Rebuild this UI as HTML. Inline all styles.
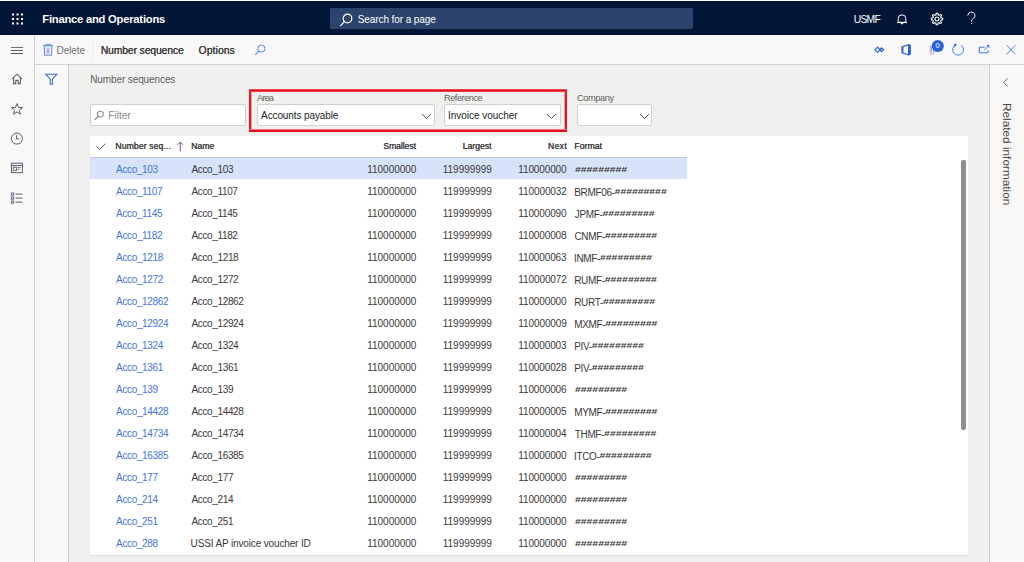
<!DOCTYPE html>
<html><head><meta charset="utf-8"><title>Number sequences</title><style>
html,body{margin:0;padding:0;width:1024px;height:562px;overflow:hidden;position:relative;background:#f0f0f0}
.t{position:absolute;font-family:"Liberation Sans",sans-serif;line-height:1;white-space:nowrap}
svg{overflow:visible}
</style></head><body>
<div style="position:absolute;left:0px;top:0px;width:1024px;height:562px;background:#f0f0ef"></div>
<div style="position:absolute;left:0px;top:0px;width:1024px;height:1px;background:#ffffff"></div>
<div style="position:absolute;left:0px;top:1px;width:1024px;height:34px;background:#011536"></div>
<div style="position:absolute;left:0px;top:35px;width:1024px;height:29px;background:#f8f8f8"></div>
<div style="position:absolute;left:0px;top:64px;width:1024px;height:1px;background:#d2d1d0"></div>
<div style="position:absolute;left:0px;top:35px;width:34px;height:527px;background:#f8f8f8"></div>
<div style="position:absolute;left:34px;top:35px;width:1px;height:527px;background:#d0cfce"></div>
<div style="position:absolute;left:35px;top:65px;width:33px;height:497px;background:#f8f8f8"></div>
<div style="position:absolute;left:68px;top:65px;width:1px;height:497px;background:#d0cfce"></div>
<div style="position:absolute;left:989px;top:65px;width:35px;height:497px;background:#f9f8f7"></div>
<div style="position:absolute;left:989px;top:65px;width:1px;height:497px;background:#cdcdcd"></div>
<svg style="position:absolute;left:0px;top:0px" width="34" height="35" viewBox="0 0 34 35"><rect x="12" y="13.5" width="2" height="2" fill="#fff"/><rect x="12" y="18" width="2" height="2" fill="#fff"/><rect x="12" y="22.5" width="2" height="2" fill="#fff"/><rect x="16.5" y="13.5" width="2" height="2" fill="#fff"/><rect x="16.5" y="18" width="2" height="2" fill="#fff"/><rect x="16.5" y="22.5" width="2" height="2" fill="#fff"/><rect x="21" y="13.5" width="2" height="2" fill="#fff"/><rect x="21" y="18" width="2" height="2" fill="#fff"/><rect x="21" y="22.5" width="2" height="2" fill="#fff"/></svg>
<div class="t" style="left:42.35px;top:14.00px;font-size:11.2px;color:#ffffff;font-weight:bold;letter-spacing:-0.217px;">Finance and Operations</div>
<div style="position:absolute;left:330px;top:8px;width:363px;height:21px;background:#2b446b;border-radius:1.5px"></div>
<svg style="position:absolute;left:338px;top:12px" width="16" height="16" viewBox="0 0 16 16"><circle cx="9.5" cy="6.5" r="4.3" fill="none" stroke="#fff" stroke-width="1.2"/><line x1="6.4" y1="9.6" x2="2.6" y2="13.6" stroke="#fff" stroke-width="1.3" stroke-linecap="round"/></svg>
<div class="t" style="left:357.80px;top:15.00px;font-size:10px;color:#ffffff;letter-spacing:-0.094px;">Search for a page</div>
<div class="t" style="left:853.65px;top:15.00px;font-size:10.3px;color:#ffffff;letter-spacing:-0.667px;">USMF</div>
<svg style="position:absolute;left:895px;top:12px" width="14" height="14" viewBox="0 0 14 14"><path d="M3.2 10.3 V6.6 a3.8 3.8 0 0 1 7.6 0 V10.3 Z" fill="none" stroke="#fff" stroke-width="1"/><line x1="2" y1="10.6" x2="12" y2="10.6" stroke="#fff" stroke-width="1"/><path d="M5.9 10.9 a1.1 1.1 0 0 0 2.2 0" fill="#fff" stroke="#fff" stroke-width="0.8"/></svg>
<svg style="position:absolute;left:930px;top:11.5px" width="14" height="14" viewBox="0 0 14 14"><circle cx="7" cy="7" r="2" fill="none" stroke="#fff" stroke-width="1.05"/><polygon points="7.00,1.25 7.15,1.25 7.30,1.26 7.45,1.27 7.60,1.29 7.75,1.33 7.88,1.44 7.96,1.82 7.96,2.47 8.00,2.84 8.08,2.96 8.18,3.01 8.28,3.05 8.39,3.09 8.49,3.13 8.59,3.17 8.69,3.21 8.79,3.25 8.89,3.30 8.98,3.35 9.09,3.38 9.23,3.36 9.52,3.11 9.98,2.66 10.31,2.45 10.48,2.46 10.61,2.54 10.73,2.63 10.85,2.73 10.96,2.83 11.07,2.93 11.17,3.04 11.27,3.15 11.37,3.27 11.46,3.39 11.54,3.52 11.55,3.69 11.34,4.02 10.89,4.48 10.64,4.77 10.62,4.91 10.65,5.02 10.70,5.11 10.75,5.21 10.79,5.31 10.83,5.41 10.87,5.51 10.91,5.61 10.95,5.72 10.99,5.82 11.04,5.92 11.16,6.00 11.53,6.04 12.18,6.04 12.56,6.12 12.67,6.25 12.71,6.40 12.73,6.55 12.74,6.70 12.75,6.85 12.75,7.00 12.75,7.15 12.74,7.30 12.73,7.45 12.71,7.60 12.67,7.75 12.56,7.88 12.18,7.96 11.53,7.96 11.16,8.00 11.04,8.08 10.99,8.18 10.95,8.28 10.91,8.39 10.87,8.49 10.83,8.59 10.79,8.69 10.75,8.79 10.70,8.89 10.65,8.98 10.62,9.09 10.64,9.23 10.89,9.52 11.34,9.98 11.55,10.31 11.54,10.48 11.46,10.61 11.37,10.73 11.27,10.85 11.17,10.96 11.07,11.07 10.96,11.17 10.85,11.27 10.73,11.37 10.61,11.46 10.48,11.54 10.31,11.55 9.98,11.34 9.52,10.89 9.23,10.64 9.09,10.62 8.98,10.65 8.89,10.70 8.79,10.75 8.69,10.79 8.59,10.83 8.49,10.87 8.39,10.91 8.28,10.95 8.18,10.99 8.08,11.04 8.00,11.16 7.96,11.53 7.96,12.18 7.88,12.56 7.75,12.67 7.60,12.71 7.45,12.73 7.30,12.74 7.15,12.75 7.00,12.75 6.85,12.75 6.70,12.74 6.55,12.73 6.40,12.71 6.25,12.67 6.12,12.56 6.04,12.18 6.04,11.53 6.00,11.16 5.92,11.04 5.82,10.99 5.72,10.95 5.61,10.91 5.51,10.87 5.41,10.83 5.31,10.79 5.21,10.75 5.11,10.70 5.02,10.65 4.91,10.62 4.77,10.64 4.48,10.89 4.02,11.34 3.69,11.55 3.52,11.54 3.39,11.46 3.27,11.37 3.15,11.27 3.04,11.17 2.93,11.07 2.83,10.96 2.73,10.85 2.63,10.73 2.54,10.61 2.46,10.48 2.45,10.31 2.66,9.98 3.11,9.52 3.36,9.23 3.38,9.09 3.35,8.98 3.30,8.89 3.25,8.79 3.21,8.69 3.17,8.59 3.13,8.49 3.09,8.39 3.05,8.28 3.01,8.18 2.96,8.08 2.84,8.00 2.47,7.96 1.82,7.96 1.44,7.88 1.33,7.75 1.29,7.60 1.27,7.45 1.26,7.30 1.25,7.15 1.25,7.00 1.25,6.85 1.26,6.70 1.27,6.55 1.29,6.40 1.33,6.25 1.44,6.12 1.82,6.04 2.47,6.04 2.84,6.00 2.96,5.92 3.01,5.82 3.05,5.72 3.09,5.61 3.13,5.51 3.17,5.41 3.21,5.31 3.25,5.21 3.30,5.11 3.35,5.02 3.38,4.91 3.36,4.77 3.11,4.48 2.66,4.02 2.45,3.69 2.46,3.52 2.54,3.39 2.63,3.27 2.73,3.15 2.83,3.04 2.93,2.93 3.04,2.83 3.15,2.73 3.27,2.63 3.39,2.54 3.52,2.46 3.69,2.45 4.02,2.66 4.48,3.11 4.77,3.36 4.91,3.38 5.02,3.35 5.11,3.30 5.21,3.25 5.31,3.21 5.41,3.17 5.51,3.13 5.61,3.09 5.72,3.05 5.82,3.01 5.92,2.96 6.00,2.84 6.04,2.47 6.04,1.82 6.12,1.44 6.25,1.33 6.40,1.29 6.55,1.27 6.70,1.26 6.85,1.25" fill="none" stroke="#fff" stroke-width="1.05" stroke-linejoin="round"/></svg>
<svg style="position:absolute;left:966px;top:12px" width="11" height="13" viewBox="0 0 11 13"><path d="M1.8 3.6 a3.6 3.6 0 1 1 5.4 3.1 c-1.1 0.7 -1.6 1.3 -1.6 2.6 v0.6" fill="none" stroke="#fff" stroke-width="1"/><circle cx="5.6" cy="11.6" r="0.65" fill="#fff"/></svg>
<svg style="position:absolute;left:11px;top:46px" width="13" height="9" viewBox="0 0 13 9"><rect x="0" y="1" width="12" height="1" fill="#707070"/><rect x="0" y="4" width="12" height="1" fill="#606060"/><rect x="0" y="7" width="12" height="1" fill="#505050"/></svg>
<svg style="position:absolute;left:42px;top:43px" width="12" height="14" viewBox="0 0 12 14"><path d="M2.3 2.6 H9.9 L9.5 12.3 H2.7 Z" fill="none" stroke="#5f8ff0" stroke-width="1.1" stroke-linejoin="round"/><line x1="1.2" y1="2.4" x2="11" y2="2.4" stroke="#5f8ff0" stroke-width="1"/><path d="M4.3 2 V1.2 H7.9 V2" fill="none" stroke="#5f8ff0" stroke-width="0.9"/><rect x="4.6" y="4.6" width="3" height="6.2" fill="#c3b1e6"/></svg>
<div class="t" style="left:56.55px;top:46.00px;font-size:10px;color:#737373;letter-spacing:-0.070px;">Delete</div>
<div style="position:absolute;left:92px;top:39px;width:1px;height:21px;background:#ebebeb"></div>
<div class="t" style="left:100.75px;top:46.00px;font-size:10.2px;color:#3b3a39;letter-spacing:-0.029px;text-shadow:0.25px 0 0 currentColor;">Number sequence</div>
<div class="t" style="left:198.60px;top:46.00px;font-size:10.2px;color:#3b3a39;letter-spacing:0.158px;text-shadow:0.25px 0 0 currentColor;">Options</div>
<svg style="position:absolute;left:254px;top:44px" width="13" height="12" viewBox="0 0 13 12"><circle cx="7.4" cy="4.6" r="3.6" fill="none" stroke="#5b86ea" stroke-width="1"/><line x1="4.8" y1="7.2" x2="1.6" y2="10.4" stroke="#5b86ea" stroke-width="1.1" stroke-linecap="round"/></svg>
<svg style="position:absolute;left:872px;top:44px" width="14" height="11" viewBox="0 0 14 11"><path d="M2.9 5.8 L5.5 3.2 L8.1 5.8 L5.5 8.4 Z" fill="none" stroke="#2a63d8" stroke-width="1.2"/><path d="M6.8 5.8 L9.6 3 L12.4 5.8 L9.6 8.6 Z" fill="#2a63d8"/><rect x="9" y="5.2" width="1.3" height="1.3" fill="#dfe7f8"/></svg>
<svg style="position:absolute;left:900px;top:43px" width="12" height="14" viewBox="0 0 12 14"><path d="M1.4 3.6 L8.6 0.9 L10.9 1.9 V11.6 L8.6 12.6 L1.4 10.2 Z M3.4 4.3 V9.7 L8 10.9 V2.5 Z" fill="#2a63d8" fill-rule="evenodd"/></svg>
<svg style="position:absolute;left:928px;top:42px" width="8" height="14" viewBox="0 0 8 14"><path d="M2.2 3.2 V10.4 a1.8 1.8 0 0 0 3.6 0 V2.2" fill="none" stroke="#b9a3dc" stroke-width="1.1"/><path d="M3.6 4.5 V10.2" stroke="#7f9ce8" stroke-width="0.9"/></svg>
<svg style="position:absolute;left:931px;top:39px" width="14" height="14" viewBox="0 0 14 14"><circle cx="6.8" cy="7" r="6.1" fill="#2a63d8"/></svg>
<div class="t" style="left:935.55px;top:42.00px;font-size:7.6px;color:#ffffff;">0</div>
<svg style="position:absolute;left:951px;top:43px" width="15" height="14" viewBox="0 0 15 14"><path d="M9.96 2.12 A5.4 5.4 0 1 1 4.56 1.93" fill="none" stroke="#4a7ae8" stroke-width="1"/><path d="M2.9 0.7 L6.3 1.3 L3.6 4.2 Z" fill="#3b6fe6"/></svg>
<svg style="position:absolute;left:977px;top:44px" width="14" height="11" viewBox="0 0 14 11"><path d="M7.8 3.3 H2.3 V8.8 H10.9 V6.2" fill="none" stroke="#4a7ae8" stroke-width="1.05"/><path d="M7.2 6.2 L11.2 2.2" fill="none" stroke="#4a7ae8" stroke-width="1"/><path d="M9.2 0.9 L12.4 0.9 L12.4 4.1 Z" fill="#3b6fe6"/></svg>
<svg style="position:absolute;left:1005px;top:44px" width="12" height="11" viewBox="0 0 12 11"><path d="M1.6 1.2 L10.4 10.2 M10.4 1.2 L1.6 10.2" fill="none" stroke="#4a7ae8" stroke-width="0.95"/></svg>
<svg style="position:absolute;left:10px;top:72px" width="14" height="14" viewBox="0 0 14 14"><path d="M2.2 6.8 L7 2.2 L11.8 6.8 M3.6 5.6 V11.6 H5.8 V8.4 H8.2 V11.6 H10.4 V5.6" fill="none" stroke="#66586f" stroke-width="1.1"/></svg>
<svg style="position:absolute;left:10px;top:102px" width="14" height="14" viewBox="0 0 14 14"><path d="M7 1.6 L8.5 5.4 L12.6 5.6 L9.4 8.2 L10.5 12.2 L7 9.9 L3.5 12.2 L4.6 8.2 L1.4 5.6 L5.5 5.4 Z" fill="none" stroke="#66586f" stroke-width="1"/></svg>
<svg style="position:absolute;left:10px;top:131px" width="14" height="15" viewBox="0 0 14 15"><circle cx="6.9" cy="7.6" r="5.5" fill="none" stroke="#66586f" stroke-width="1"/><path d="M6.5 4.2 V8 H9.2" fill="none" stroke="#66586f" stroke-width="1"/></svg>
<svg style="position:absolute;left:10px;top:161px" width="14" height="14" viewBox="0 0 14 14"><rect x="1.4" y="2.2" width="11" height="9.4" fill="none" stroke="#66586f" stroke-width="1"/><line x1="1.4" y1="4.6" x2="12.4" y2="4.6" stroke="#66586f" stroke-width="1"/><rect x="3.2" y="6.3" width="3.2" height="3.4" fill="none" stroke="#66586f" stroke-width="0.9"/><path d="M7.6 6.6 H10.6 M7.6 8.4 H9.6" stroke="#66586f" stroke-width="0.9"/></svg>
<svg style="position:absolute;left:10px;top:191px" width="14" height="14" viewBox="0 0 14 14"><rect x="1.3" y="2" width="2.4" height="2.2" fill="none" stroke="#66586f" stroke-width="0.9"/><rect x="1.3" y="6" width="2.4" height="2.2" fill="none" stroke="#66586f" stroke-width="0.9"/><rect x="1.3" y="10" width="2.4" height="2.2" fill="none" stroke="#66586f" stroke-width="0.9"/><path d="M5.6 3.1 H12.4 M5.6 7.1 H12.4 M5.6 11.1 H12.4" stroke="#66586f" stroke-width="1"/></svg>
<svg style="position:absolute;left:44px;top:72px" width="15" height="14" viewBox="0 0 15 14"><path d="M1.8 2.2 H12.9 L8.4 7.2 V12.2 H6.3 V7.2 Z" fill="none" stroke="#3d6fe0" stroke-width="1.1"/></svg>
<div class="t" style="left:90.15px;top:75.00px;font-size:10px;color:#605e5c;letter-spacing:-0.100px;">Number sequences</div>
<div style="position:absolute;left:90px;top:104px;width:156px;height:22px;background:#fff;border:1px solid #cfcfcf;border-radius:2px;box-sizing:border-box"></div>
<svg style="position:absolute;left:94px;top:110px" width="11" height="11" viewBox="0 0 11 11"><circle cx="6.4" cy="4.2" r="3" fill="none" stroke="#777" stroke-width="1"/><line x1="4.2" y1="6.4" x2="1.3" y2="9.3" stroke="#777" stroke-width="1.1" stroke-linecap="round"/></svg>
<div class="t" style="left:108.25px;top:111.00px;font-size:10px;color:#8a8886;letter-spacing:0.070px;">Filter</div>
<div style="position:absolute;left:249px;top:89px;width:318px;height:1px;background:rgba(232,16,28,0.75)"></div>
<div style="position:absolute;left:249px;top:90px;width:318px;height:1px;background:rgba(232,16,28,1)"></div>
<div style="position:absolute;left:249px;top:91px;width:318px;height:1px;background:rgba(232,16,28,0.8)"></div>
<div style="position:absolute;left:249px;top:129px;width:318px;height:1px;background:rgba(232,16,28,0.55)"></div>
<div style="position:absolute;left:249px;top:130px;width:318px;height:2px;background:rgba(232,16,28,1)"></div>
<div style="position:absolute;left:249px;top:92px;width:2px;height:37px;background:rgba(232,16,28,1)"></div>
<div style="position:absolute;left:251px;top:92px;width:1px;height:37px;background:rgba(232,16,28,0.35)"></div>
<div style="position:absolute;left:565px;top:92px;width:2px;height:37px;background:rgba(232,16,28,1)"></div>
<div style="position:absolute;left:564px;top:92px;width:1px;height:37px;background:rgba(232,16,28,0.35)"></div>
<div class="t" style="left:257.00px;top:94.00px;font-size:9.2px;color:#605e5c;letter-spacing:-0.833px;">Area</div>
<div style="position:absolute;left:257px;top:104px;width:178px;height:21.5px;background:#fff;border:1px solid #d0d0d0;border-radius:2px;box-sizing:border-box"></div>
<div class="t" style="left:261.10px;top:111.00px;font-size:10px;color:#201f1e;letter-spacing:-0.113px;">Accounts payable</div>
<svg style="position:absolute;left:421px;top:112.5px" width="11" height="7" viewBox="0 0 11 7"><path d="M1 1 L5.5 5.5 L10 1" fill="none" stroke="#555" stroke-width="1"/></svg>
<div class="t" style="left:444.05px;top:94.00px;font-size:9.2px;color:#605e5c;letter-spacing:-0.469px;">Reference</div>
<div style="position:absolute;left:444px;top:104px;width:117px;height:21.5px;background:#fff;border:1px solid #d0d0d0;border-radius:2px;box-sizing:border-box"></div>
<div class="t" style="left:447.90px;top:111.00px;font-size:10px;color:#201f1e;letter-spacing:-0.018px;">Invoice voucher</div>
<svg style="position:absolute;left:546px;top:112.5px" width="11" height="7" viewBox="0 0 11 7"><path d="M1 1 L5.5 5.5 L10 1" fill="none" stroke="#555" stroke-width="1"/></svg>
<div class="t" style="left:577.10px;top:94.00px;font-size:9.2px;color:#605e5c;letter-spacing:-0.375px;">Company</div>
<div style="position:absolute;left:577px;top:104px;width:74.5px;height:21.5px;background:#fff;border:1px solid #d0d0d0;border-radius:2px;box-sizing:border-box"></div>
<svg style="position:absolute;left:639px;top:112.5px" width="11" height="7" viewBox="0 0 11 7"><path d="M1 1 L5.5 5.5 L10 1" fill="none" stroke="#555" stroke-width="1"/></svg>
<div style="position:absolute;left:90px;top:136px;width:878px;height:419px;background:#fff;box-shadow:0 1px 1px rgba(0,0,0,0.08)"></div>
<svg style="position:absolute;left:95px;top:142px" width="12" height="9" viewBox="0 0 12 9"><path d="M1.5 4.5 L4.5 7.5 L10.5 1.5" fill="none" stroke="#605e5c" stroke-width="1"/></svg>
<div class="t" style="left:115.25px;top:142.00px;font-size:8.6px;color:#3b3a39;letter-spacing:0.117px;text-shadow:0.35px 0 0 currentColor;">Number seq...</div>
<svg style="position:absolute;left:176px;top:141px" width="8" height="11" viewBox="0 0 8 11"><path d="M4.3 1 V10.5 M1.5 3.8 L4.3 1 L7.1 3.8" fill="none" stroke="#6a5a7a" stroke-width="1"/></svg>
<div class="t" style="left:191.05px;top:142.00px;font-size:8.6px;color:#3b3a39;letter-spacing:0.050px;text-shadow:0.35px 0 0 currentColor;">Name</div>
<div class="t" style="left:383.20px;top:142.00px;font-size:8.6px;color:#3b3a39;letter-spacing:-0.043px;text-shadow:0.35px 0 0 currentColor;">Smallest</div>
<div class="t" style="left:462.60px;top:142.00px;font-size:8.6px;color:#3b3a39;letter-spacing:0.025px;text-shadow:0.35px 0 0 currentColor;">Largest</div>
<div class="t" style="left:547.85px;top:142.00px;font-size:8.6px;color:#3b3a39;letter-spacing:0.333px;text-shadow:0.35px 0 0 currentColor;">Next</div>
<div class="t" style="left:574.25px;top:142.00px;font-size:8.6px;color:#3b3a39;letter-spacing:0.080px;text-shadow:0.35px 0 0 currentColor;">Format</div>
<div style="position:absolute;left:90px;top:156.5px;width:597px;height:1px;background:#c8c8c8"></div>
<div style="position:absolute;left:90px;top:157.5px;width:597px;height:21.5px;background:#d6e3fa"></div>
<div class="t" style="left:116.10px;top:165.00px;font-size:10px;color:#4574e0;letter-spacing:-0.360px;">Acco_103</div>
<div class="t" style="left:191.50px;top:165.00px;font-size:10px;color:#3a3938;letter-spacing:-0.360px;">Acco_103</div>
<div class="t" style="left:367.25px;top:165.00px;font-size:10px;color:#3a3938;letter-spacing:-0.031px;">110000000</div>
<div class="t" style="left:442.80px;top:165.00px;font-size:10px;color:#3a3938;letter-spacing:-0.037px;">119999999</div>
<div class="t" style="left:518.25px;top:165.00px;font-size:10px;color:#3a3938;letter-spacing:-0.119px;">110000000</div>
<div class="t" style="left:575.00px;top:165.00px;font-size:10px;color:#3a3938;"><span style="display:inline-block;font-weight:bold;font-size:10.5px;letter-spacing:-0.05px;transform:translateY(-1.5px) scaleY(0.74);transform-origin:0 60%">#########</span></div>
<div class="t" style="left:116.10px;top:187.00px;font-size:10px;color:#4574e0;letter-spacing:-0.360px;">Acco_1107</div>
<div class="t" style="left:191.50px;top:187.00px;font-size:10px;color:#3a3938;letter-spacing:-0.360px;">Acco_1107</div>
<div class="t" style="left:367.25px;top:187.00px;font-size:10px;color:#3a3938;letter-spacing:-0.031px;">110000000</div>
<div class="t" style="left:442.80px;top:187.00px;font-size:10px;color:#3a3938;letter-spacing:-0.037px;">119999999</div>
<div class="t" style="left:518.25px;top:187.00px;font-size:10px;color:#3a3938;letter-spacing:-0.088px;">110000032</div>
<div class="t" style="left:574.25px;top:187.00px;font-size:10px;color:#3a3938;"><span style="letter-spacing:-0.35px">BRMF06-</span><span style="display:inline-block;font-weight:bold;font-size:10.5px;letter-spacing:-0.05px;transform:translateY(-1.5px) scaleY(0.74);transform-origin:0 60%">#########</span></div>
<div class="t" style="left:116.10px;top:209.00px;font-size:10px;color:#4574e0;letter-spacing:-0.360px;">Acco_1145</div>
<div class="t" style="left:191.50px;top:209.00px;font-size:10px;color:#3a3938;letter-spacing:-0.360px;">Acco_1145</div>
<div class="t" style="left:367.25px;top:209.00px;font-size:10px;color:#3a3938;letter-spacing:-0.031px;">110000000</div>
<div class="t" style="left:442.80px;top:209.00px;font-size:10px;color:#3a3938;letter-spacing:-0.037px;">119999999</div>
<div class="t" style="left:518.25px;top:209.00px;font-size:10px;color:#3a3938;letter-spacing:-0.119px;">110000090</div>
<div class="t" style="left:574.75px;top:209.00px;font-size:10px;color:#3a3938;"><span style="letter-spacing:-0.35px">JPMF-</span><span style="display:inline-block;font-weight:bold;font-size:10.5px;letter-spacing:-0.05px;transform:translateY(-1.5px) scaleY(0.74);transform-origin:0 60%">#########</span></div>
<div class="t" style="left:116.10px;top:231.00px;font-size:10px;color:#4574e0;letter-spacing:-0.360px;">Acco_1182</div>
<div class="t" style="left:191.50px;top:231.00px;font-size:10px;color:#3a3938;letter-spacing:-0.360px;">Acco_1182</div>
<div class="t" style="left:367.25px;top:231.00px;font-size:10px;color:#3a3938;letter-spacing:-0.031px;">110000000</div>
<div class="t" style="left:442.80px;top:231.00px;font-size:10px;color:#3a3938;letter-spacing:-0.037px;">119999999</div>
<div class="t" style="left:518.25px;top:231.00px;font-size:10px;color:#3a3938;letter-spacing:-0.119px;">110000008</div>
<div class="t" style="left:574.50px;top:231.00px;font-size:10px;color:#3a3938;"><span style="letter-spacing:-0.35px">CNMF-</span><span style="display:inline-block;font-weight:bold;font-size:10.5px;letter-spacing:-0.05px;transform:translateY(-1.5px) scaleY(0.74);transform-origin:0 60%">#########</span></div>
<div class="t" style="left:116.10px;top:253.00px;font-size:10px;color:#4574e0;letter-spacing:-0.360px;">Acco_1218</div>
<div class="t" style="left:191.50px;top:253.00px;font-size:10px;color:#3a3938;letter-spacing:-0.360px;">Acco_1218</div>
<div class="t" style="left:367.25px;top:253.00px;font-size:10px;color:#3a3938;letter-spacing:-0.031px;">110000000</div>
<div class="t" style="left:442.80px;top:253.00px;font-size:10px;color:#3a3938;letter-spacing:-0.037px;">119999999</div>
<div class="t" style="left:518.25px;top:253.00px;font-size:10px;color:#3a3938;letter-spacing:-0.119px;">110000063</div>
<div class="t" style="left:574.00px;top:253.00px;font-size:10px;color:#3a3938;"><span style="letter-spacing:-0.35px">INMF-</span><span style="display:inline-block;font-weight:bold;font-size:10.5px;letter-spacing:-0.05px;transform:translateY(-1.5px) scaleY(0.74);transform-origin:0 60%">#########</span></div>
<div class="t" style="left:116.10px;top:275.00px;font-size:10px;color:#4574e0;letter-spacing:-0.360px;">Acco_1272</div>
<div class="t" style="left:191.50px;top:275.00px;font-size:10px;color:#3a3938;letter-spacing:-0.360px;">Acco_1272</div>
<div class="t" style="left:367.25px;top:275.00px;font-size:10px;color:#3a3938;letter-spacing:-0.031px;">110000000</div>
<div class="t" style="left:442.80px;top:275.00px;font-size:10px;color:#3a3938;letter-spacing:-0.037px;">119999999</div>
<div class="t" style="left:518.25px;top:275.00px;font-size:10px;color:#3a3938;letter-spacing:-0.088px;">110000072</div>
<div class="t" style="left:574.25px;top:275.00px;font-size:10px;color:#3a3938;"><span style="letter-spacing:-0.35px">RUMF-</span><span style="display:inline-block;font-weight:bold;font-size:10.5px;letter-spacing:-0.05px;transform:translateY(-1.5px) scaleY(0.74);transform-origin:0 60%">#########</span></div>
<div class="t" style="left:116.10px;top:297.00px;font-size:10px;color:#4574e0;letter-spacing:-0.360px;">Acco_12862</div>
<div class="t" style="left:191.50px;top:297.00px;font-size:10px;color:#3a3938;letter-spacing:-0.360px;">Acco_12862</div>
<div class="t" style="left:367.25px;top:297.00px;font-size:10px;color:#3a3938;letter-spacing:-0.031px;">110000000</div>
<div class="t" style="left:442.80px;top:297.00px;font-size:10px;color:#3a3938;letter-spacing:-0.037px;">119999999</div>
<div class="t" style="left:518.25px;top:297.00px;font-size:10px;color:#3a3938;letter-spacing:-0.119px;">110000000</div>
<div class="t" style="left:574.25px;top:297.00px;font-size:10px;color:#3a3938;"><span style="letter-spacing:-0.35px">RURT-</span><span style="display:inline-block;font-weight:bold;font-size:10.5px;letter-spacing:-0.05px;transform:translateY(-1.5px) scaleY(0.74);transform-origin:0 60%">#########</span></div>
<div class="t" style="left:116.10px;top:319.00px;font-size:10px;color:#4574e0;letter-spacing:-0.360px;">Acco_12924</div>
<div class="t" style="left:191.50px;top:319.00px;font-size:10px;color:#3a3938;letter-spacing:-0.360px;">Acco_12924</div>
<div class="t" style="left:367.25px;top:319.00px;font-size:10px;color:#3a3938;letter-spacing:-0.031px;">110000000</div>
<div class="t" style="left:442.80px;top:319.00px;font-size:10px;color:#3a3938;letter-spacing:-0.037px;">119999999</div>
<div class="t" style="left:518.25px;top:319.00px;font-size:10px;color:#3a3938;letter-spacing:-0.088px;">110000009</div>
<div class="t" style="left:574.25px;top:319.00px;font-size:10px;color:#3a3938;"><span style="letter-spacing:-0.35px">MXMF-</span><span style="display:inline-block;font-weight:bold;font-size:10.5px;letter-spacing:-0.05px;transform:translateY(-1.5px) scaleY(0.74);transform-origin:0 60%">#########</span></div>
<div class="t" style="left:116.10px;top:341.00px;font-size:10px;color:#4574e0;letter-spacing:-0.360px;">Acco_1324</div>
<div class="t" style="left:191.50px;top:341.00px;font-size:10px;color:#3a3938;letter-spacing:-0.360px;">Acco_1324</div>
<div class="t" style="left:367.25px;top:341.00px;font-size:10px;color:#3a3938;letter-spacing:-0.031px;">110000000</div>
<div class="t" style="left:442.80px;top:341.00px;font-size:10px;color:#3a3938;letter-spacing:-0.037px;">119999999</div>
<div class="t" style="left:518.25px;top:341.00px;font-size:10px;color:#3a3938;letter-spacing:-0.119px;">110000003</div>
<div class="t" style="left:574.25px;top:341.00px;font-size:10px;color:#3a3938;"><span style="letter-spacing:-0.35px">PIV-</span><span style="display:inline-block;font-weight:bold;font-size:10.5px;letter-spacing:-0.05px;transform:translateY(-1.5px) scaleY(0.74);transform-origin:0 60%">#########</span></div>
<div class="t" style="left:116.10px;top:363.00px;font-size:10px;color:#4574e0;letter-spacing:-0.360px;">Acco_1361</div>
<div class="t" style="left:191.50px;top:363.00px;font-size:10px;color:#3a3938;letter-spacing:-0.360px;">Acco_1361</div>
<div class="t" style="left:367.25px;top:363.00px;font-size:10px;color:#3a3938;letter-spacing:-0.031px;">110000000</div>
<div class="t" style="left:442.80px;top:363.00px;font-size:10px;color:#3a3938;letter-spacing:-0.037px;">119999999</div>
<div class="t" style="left:518.25px;top:363.00px;font-size:10px;color:#3a3938;letter-spacing:-0.119px;">110000028</div>
<div class="t" style="left:574.25px;top:363.00px;font-size:10px;color:#3a3938;"><span style="letter-spacing:-0.35px">PIV-</span><span style="display:inline-block;font-weight:bold;font-size:10.5px;letter-spacing:-0.05px;transform:translateY(-1.5px) scaleY(0.74);transform-origin:0 60%">#########</span></div>
<div class="t" style="left:116.10px;top:385.00px;font-size:10px;color:#4574e0;letter-spacing:-0.360px;">Acco_139</div>
<div class="t" style="left:191.50px;top:385.00px;font-size:10px;color:#3a3938;letter-spacing:-0.360px;">Acco_139</div>
<div class="t" style="left:367.25px;top:385.00px;font-size:10px;color:#3a3938;letter-spacing:-0.031px;">110000000</div>
<div class="t" style="left:442.80px;top:385.00px;font-size:10px;color:#3a3938;letter-spacing:-0.037px;">119999999</div>
<div class="t" style="left:518.25px;top:385.00px;font-size:10px;color:#3a3938;letter-spacing:-0.119px;">110000006</div>
<div class="t" style="left:575.00px;top:385.00px;font-size:10px;color:#3a3938;"><span style="display:inline-block;font-weight:bold;font-size:10.5px;letter-spacing:-0.05px;transform:translateY(-1.5px) scaleY(0.74);transform-origin:0 60%">#########</span></div>
<div class="t" style="left:116.10px;top:407.00px;font-size:10px;color:#4574e0;letter-spacing:-0.360px;">Acco_14428</div>
<div class="t" style="left:191.50px;top:407.00px;font-size:10px;color:#3a3938;letter-spacing:-0.360px;">Acco_14428</div>
<div class="t" style="left:367.25px;top:407.00px;font-size:10px;color:#3a3938;letter-spacing:-0.031px;">110000000</div>
<div class="t" style="left:442.80px;top:407.00px;font-size:10px;color:#3a3938;letter-spacing:-0.037px;">119999999</div>
<div class="t" style="left:518.25px;top:407.00px;font-size:10px;color:#3a3938;letter-spacing:-0.119px;">110000005</div>
<div class="t" style="left:574.25px;top:407.00px;font-size:10px;color:#3a3938;"><span style="letter-spacing:-0.35px">MYMF-</span><span style="display:inline-block;font-weight:bold;font-size:10.5px;letter-spacing:-0.05px;transform:translateY(-1.5px) scaleY(0.74);transform-origin:0 60%">#########</span></div>
<div class="t" style="left:116.10px;top:429.00px;font-size:10px;color:#4574e0;letter-spacing:-0.360px;">Acco_14734</div>
<div class="t" style="left:191.50px;top:429.00px;font-size:10px;color:#3a3938;letter-spacing:-0.360px;">Acco_14734</div>
<div class="t" style="left:367.25px;top:429.00px;font-size:10px;color:#3a3938;letter-spacing:-0.031px;">110000000</div>
<div class="t" style="left:442.80px;top:429.00px;font-size:10px;color:#3a3938;letter-spacing:-0.037px;">119999999</div>
<div class="t" style="left:518.25px;top:429.00px;font-size:10px;color:#3a3938;letter-spacing:-0.119px;">110000004</div>
<div class="t" style="left:574.75px;top:429.00px;font-size:10px;color:#3a3938;"><span style="letter-spacing:-0.35px">THMF-</span><span style="display:inline-block;font-weight:bold;font-size:10.5px;letter-spacing:-0.05px;transform:translateY(-1.5px) scaleY(0.74);transform-origin:0 60%">#########</span></div>
<div class="t" style="left:116.10px;top:451.00px;font-size:10px;color:#4574e0;letter-spacing:-0.360px;">Acco_16385</div>
<div class="t" style="left:191.50px;top:451.00px;font-size:10px;color:#3a3938;letter-spacing:-0.360px;">Acco_16385</div>
<div class="t" style="left:367.25px;top:451.00px;font-size:10px;color:#3a3938;letter-spacing:-0.031px;">110000000</div>
<div class="t" style="left:442.80px;top:451.00px;font-size:10px;color:#3a3938;letter-spacing:-0.037px;">119999999</div>
<div class="t" style="left:518.25px;top:451.00px;font-size:10px;color:#3a3938;letter-spacing:-0.119px;">110000000</div>
<div class="t" style="left:574.00px;top:451.00px;font-size:10px;color:#3a3938;"><span style="letter-spacing:-0.35px">ITCO-</span><span style="display:inline-block;font-weight:bold;font-size:10.5px;letter-spacing:-0.05px;transform:translateY(-1.5px) scaleY(0.74);transform-origin:0 60%">#########</span></div>
<div class="t" style="left:116.10px;top:473.00px;font-size:10px;color:#4574e0;letter-spacing:-0.360px;">Acco_177</div>
<div class="t" style="left:191.50px;top:473.00px;font-size:10px;color:#3a3938;letter-spacing:-0.360px;">Acco_177</div>
<div class="t" style="left:367.25px;top:473.00px;font-size:10px;color:#3a3938;letter-spacing:-0.031px;">110000000</div>
<div class="t" style="left:442.80px;top:473.00px;font-size:10px;color:#3a3938;letter-spacing:-0.037px;">119999999</div>
<div class="t" style="left:518.25px;top:473.00px;font-size:10px;color:#3a3938;letter-spacing:-0.119px;">110000000</div>
<div class="t" style="left:575.00px;top:473.00px;font-size:10px;color:#3a3938;"><span style="display:inline-block;font-weight:bold;font-size:10.5px;letter-spacing:-0.05px;transform:translateY(-1.5px) scaleY(0.74);transform-origin:0 60%">#########</span></div>
<div class="t" style="left:116.10px;top:495.00px;font-size:10px;color:#4574e0;letter-spacing:-0.360px;">Acco_214</div>
<div class="t" style="left:191.50px;top:495.00px;font-size:10px;color:#3a3938;letter-spacing:-0.360px;">Acco_214</div>
<div class="t" style="left:367.25px;top:495.00px;font-size:10px;color:#3a3938;letter-spacing:-0.031px;">110000000</div>
<div class="t" style="left:442.80px;top:495.00px;font-size:10px;color:#3a3938;letter-spacing:-0.037px;">119999999</div>
<div class="t" style="left:518.25px;top:495.00px;font-size:10px;color:#3a3938;letter-spacing:-0.119px;">110000000</div>
<div class="t" style="left:575.00px;top:495.00px;font-size:10px;color:#3a3938;"><span style="display:inline-block;font-weight:bold;font-size:10.5px;letter-spacing:-0.05px;transform:translateY(-1.5px) scaleY(0.74);transform-origin:0 60%">#########</span></div>
<div class="t" style="left:116.10px;top:517.00px;font-size:10px;color:#4574e0;letter-spacing:-0.360px;">Acco_251</div>
<div class="t" style="left:191.50px;top:517.00px;font-size:10px;color:#3a3938;letter-spacing:-0.360px;">Acco_251</div>
<div class="t" style="left:367.25px;top:517.00px;font-size:10px;color:#3a3938;letter-spacing:-0.031px;">110000000</div>
<div class="t" style="left:442.80px;top:517.00px;font-size:10px;color:#3a3938;letter-spacing:-0.037px;">119999999</div>
<div class="t" style="left:518.25px;top:517.00px;font-size:10px;color:#3a3938;letter-spacing:-0.119px;">110000000</div>
<div class="t" style="left:575.00px;top:517.00px;font-size:10px;color:#3a3938;"><span style="display:inline-block;font-weight:bold;font-size:10.5px;letter-spacing:-0.05px;transform:translateY(-1.5px) scaleY(0.74);transform-origin:0 60%">#########</span></div>
<div class="t" style="left:116.10px;top:539.00px;font-size:10px;color:#4574e0;letter-spacing:-0.360px;">Acco_288</div>
<div class="t" style="left:190.55px;top:539.00px;font-size:10px;color:#3a3938;letter-spacing:-0.140px;">USSI AP invoice voucher ID</div>
<div class="t" style="left:367.25px;top:539.00px;font-size:10px;color:#3a3938;letter-spacing:-0.031px;">110000000</div>
<div class="t" style="left:442.80px;top:539.00px;font-size:10px;color:#3a3938;letter-spacing:-0.037px;">119999999</div>
<div class="t" style="left:518.25px;top:539.00px;font-size:10px;color:#3a3938;letter-spacing:-0.119px;">110000000</div>
<div class="t" style="left:575.00px;top:539.00px;font-size:10px;color:#3a3938;"><span style="display:inline-block;font-weight:bold;font-size:10.5px;letter-spacing:-0.05px;transform:translateY(-1.5px) scaleY(0.74);transform-origin:0 60%">#########</span></div>
<div style="position:absolute;left:961px;top:160px;width:4.5px;height:270px;background:#8f8f8f;border-radius:2px"></div>
<svg style="position:absolute;left:1000px;top:76px" width="12" height="12" viewBox="0 0 12 12"><path d="M7.6 2.5 L3.6 6.5 L7.6 10.5" fill="none" stroke="#666" stroke-width="1"/></svg>
<div class="t" style="left:1000.5px;top:103.3px;font-size:11.8px;color:#48464a;transform-origin:0 0;transform:translateX(11px) rotate(90deg);">Related information</div>
</body></html>
